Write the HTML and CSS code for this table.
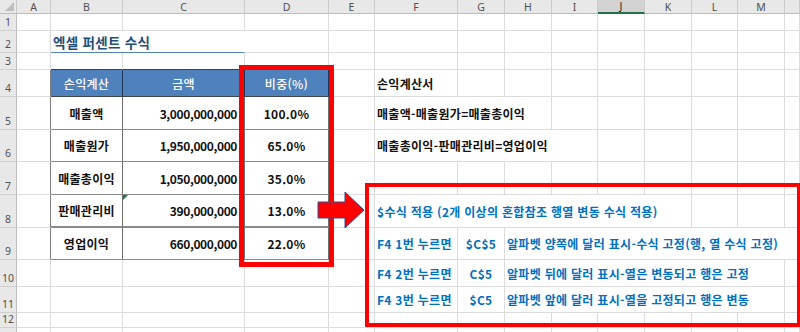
FILE: index.html
```html
<!DOCTYPE html>
<html lang="ko">
<head>
<meta charset="utf-8">
<title>엑셀 퍼센트 수식</title>
<link rel="stylesheet" href="styles.css">
</head>
<body>
<div class="sheet">
  <div class="row">
    <div class="ch corner"></div>
    <div class="ch">A</div><div class="ch">B</div><div class="ch">C</div><div class="ch">D</div><div class="ch">E</div>
    <div class="ch">F</div><div class="ch">G</div><div class="ch">H</div><div class="ch">I</div><div class="ch sel">J</div>
    <div class="ch">K</div><div class="ch">L</div><div class="ch">M</div><div class="ch"></div>
  </div>
  <div class="row">
    <div class="rh">1</div>
    <div></div><div></div><div></div><div></div><div></div>
    <div></div><div></div><div></div><div></div><div></div>
    <div></div><div></div><div></div><div></div>
  </div>
  <div class="row">
    <div class="rh">2</div>
    <div></div>
    <div class="title s2">엑셀 퍼센트 수식</div>
    <div></div><div></div><div></div><div></div><div></div>
    <div></div><div></div><div></div><div></div><div></div>
    <div></div>
  </div>
  <div class="row">
    <div class="rh">3</div>
    <div></div>
    <div class="tt"></div><div class="tt"></div><div class="tt"></div>
    <div></div><div></div><div></div><div></div><div></div>
    <div></div><div></div><div></div><div></div><div></div>
  </div>
  <div class="row">
    <div class="rh">4</div>
    <div class="tl"></div>
    <div class="th">손익계산</div><div class="th">금액</div><div class="th">비중(%)</div>
    <div></div>
    <div class="txt">손익계산서</div>
    <div></div><div></div><div></div><div></div><div></div>
    <div></div><div></div><div></div>
  </div>
  <div class="row">
    <div class="rh">5</div>
    <div class="tl"></div>
    <div class="td">매출액</div><div class="td r">3,000,000,000</div><div class="td">100.0%</div>
    <div></div>
    <div class="txt s3">매출액-매출원가=매출총이익</div>
    <div></div><div></div><div></div><div></div><div></div>
    <div></div>
  </div>
  <div class="row">
    <div class="rh">6</div>
    <div class="tl"></div>
    <div class="td">매출원가</div><div class="td r">1,950,000,000</div><div class="td">65.0%</div>
    <div></div>
    <div class="txt s4">매출총이익-판매관리비=영업이익</div>
    <div></div><div></div><div></div><div></div><div></div>
  </div>
  <div class="row">
    <div class="rh">7</div>
    <div class="tl"></div>
    <div class="td">매출총이익</div><div class="td r">1,050,000,000</div><div class="td">35.0%</div>
    <div></div><div></div><div></div><div></div><div></div>
    <div></div><div></div><div></div><div></div><div></div>
  </div>
  <div class="row">
    <div class="rh">8</div>
    <div class="tl"></div>
    <div class="td pre">판매관리비</div><div class="td r pre flag">390,000,000</div><div class="td pre">13.0%</div>
    <div></div>
    <div class="txt blue s6">$수식 적용 (2개 이상의 혼합참조 행열 변동 수식 적용)</div>
    <div></div><div></div><div></div>
  </div>
  <div class="row">
    <div class="rh">9</div>
    <div class="tl"></div>
    <div class="td">영업이익</div><div class="td r">660,000,000</div><div class="td">22.0%</div>
    <div></div>
    <div class="txt blue">F4 1번 누르면</div>
    <div class="ctr blue">$C$5</div>
    <div class="txt blue s7">알파벳 양쪽에 달러 표시-수식 고정(행, 열 수식 고정)</div>
  </div>
  <div class="row">
    <div class="rh">10</div>
    <div></div><div></div><div></div><div></div><div></div>
    <div class="txt blue">F4 2번 누르면</div>
    <div class="ctr blue">C$5</div>
    <div class="txt blue s6">알파벳 뒤에 달러 표시-열은 변동되고 행은 고정</div>
    <div></div>
  </div>
  <div class="row">
    <div class="rh">11</div>
    <div></div><div></div><div></div><div></div><div></div>
    <div class="txt blue">F4 3번 누르면</div>
    <div class="ctr blue">$C5</div>
    <div class="txt blue s6">알파벳 앞에 달러 표시-열을 고정되고 행은 변동</div>
    <div></div>
  </div>
  <div class="row">
    <div class="rh">12</div>
    <div></div><div></div><div></div><div></div><div></div>
    <div></div><div></div><div></div><div></div><div></div>
    <div></div><div></div><div></div><div></div>
  </div>
  <div class="row">
    <div class="rh"></div>
    <div></div><div></div><div></div><div></div><div></div>
    <div></div><div></div><div></div><div></div><div></div>
    <div></div><div></div><div></div><div></div>
  </div>

  <div class="mark mark-col"></div>
  <div class="mark mark-box"></div>
  <svg class="arrow" width="49" height="39" viewBox="0 0 49 39" aria-hidden="true">
    <polygon points="1,11 28,11 28,1 47,19 28,37 28,27 1,27" fill="#ff0000" stroke="#2f4f8f" stroke-width="1"/>
  </svg>
</div>
</body>
</html>
```

FILE: styles.css
```css
* { box-sizing: border-box; }
html, body { margin: 0; padding: 0; }
body {
  width: 800px;
  height: 332px;
  overflow: hidden;
  background: #ffffff;
  font-family: "Noto Sans CJK KR", "Noto Sans", sans-serif;
}

.sheet {
  position: relative;
  display: grid;
  grid-template-columns: 17px 34px 72px 122px 84px 46px 83px 47px 47px 46px 47px 47px 46px 47px 15px;
  grid-template-rows: 14px 17px 22px 17px 27px 33px 32px 33px 33px 32px 27px 26px 15px 20px;
}

.row { display: contents; }

.row > div {
  position: relative;
  display: flex;
  align-items: center;
  min-width: 0;
  white-space: nowrap;
  border-right: 1px solid #dcdcdc;
  border-bottom: 1px solid #dcdcdc;
  font-size: 12px;
  font-weight: 700;
  letter-spacing: 0.3px;
  color: #111111;
}

/* headers */
.row > .ch {
  justify-content: center;
  background: #e8e8e8;
  border-right: 1px solid #c9c9c9;
  border-bottom: 1px solid #bdbdbd;
  font-family: "Noto Sans", sans-serif;
  font-size: 10.5px;
  font-weight: 400;
  letter-spacing: 0;
  color: #505050;
}
.row > .ch.sel {
  background: #d2d2d2;
  border-bottom: 2px solid #217346;
  color: #262626;
}
.corner::after {
  content: "";
  position: absolute;
  right: 2px;
  bottom: 2px;
  width: 0;
  height: 0;
  border-left: 9px solid transparent;
  border-bottom: 9px solid #bdbdbd;
}
.row > .rh {
  justify-content: center;
  align-items: flex-end;
  padding-bottom: 1px;
  background: #e8e8e8;
  border-right: 1px solid #bdbdbd;
  border-bottom: 1px solid #d0d0d0;
  font-family: "Noto Sans", sans-serif;
  font-size: 10.5px;
  font-weight: 400;
  letter-spacing: 0;
  line-height: 14px;
  color: #505050;
}

/* spans */
.s2 { grid-column: span 2; }
.s3 { grid-column: span 3; }
.s4 { grid-column: span 4; }
.s6 { grid-column: span 6; }
.s7 { grid-column: span 7; }

/* title */
.row > .title {
  padding-left: 2px;
  font-size: 13.5px;
  color: #1f4e79;
  border-right-color: transparent;
  border-bottom: 1px solid #4f81bd;
}

/* data table */
.row > .tl { border-right-color: #7f7f7f; }
.row > .tt { border-bottom-color: #33425a; }
.row > .th {
  justify-content: center;
  background: #4f81bd;
  color: #ffffff;
  font-weight: 500;
  border-right: 1px solid #1f3556;
  border-bottom: 1px solid #3d4550;
}
.row > .td {
  justify-content: center;
  border-right: 1px solid #6e6e6e;
  border-bottom: 1px solid #8a8a8a;
}
.row > .td.r {
  justify-content: flex-end;
  padding-right: 7px;
  letter-spacing: -0.4px;
}
.row > .td.pre { border-bottom: 2px solid #8a8a8a; }
.flag::before {
  content: "";
  position: absolute;
  left: 0;
  top: 0;
  width: 0;
  height: 0;
  border-top: 5px solid #1f7a45;
  border-right: 5px solid transparent;
}

/* text cells */
.row > .txt { padding-left: 2px; }
.row > .ctr { justify-content: center; }
.row > .blue { color: #0070c0; }

/* overlays */
.mark {
  position: absolute;
  border: 5px solid #ff0000;
  pointer-events: none;
}
.mark-col {
  left: 239px;
  top: 65px;
  width: 95px;
  height: 202px;
}
.mark-box {
  left: 365px;
  top: 183px;
  width: 436px;
  height: 144px;
  border-width: 4px;
}
.arrow {
  position: absolute;
  left: 317px;
  top: 191px;
}
```
